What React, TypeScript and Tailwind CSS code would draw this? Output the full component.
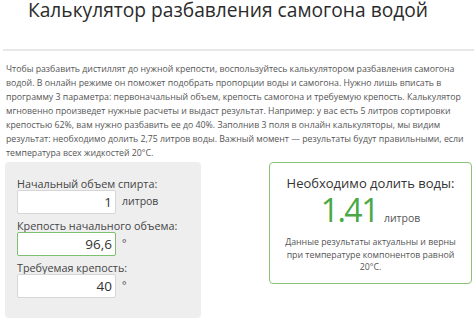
const lines = [
  'Чтобы разбавить дистиллят до нужной крепости, воспользуйтесь калькулятором разбавления самогона',
  'водой. В онлайн режиме он поможет подобрать пропорции воды и самогона. Нужно лишь вписать в',
  'программу 3 параметра: первоначальный объем, крепость самогона и требуемую крепость. Калькулятор',
  'мгновенно произведет нужные расчеты и выдаст результат. Например: у вас есть 5 литров сортировки',
  'крепостью 62%, вам нужно разбавить ее до 40%. Заполнив 3 поля в онлайн калькуляторы, мы видим',
  'результат: необходимо долить 2,75 литров воды. Важный момент — результаты будут правильными, если',
  'температура всех жидкостей 20°С.',
];

export default function App() {
  return (
    <div className="w-[474px] h-[324px] overflow-hidden bg-white font-['Open_Sans',sans-serif] text-[#333]">
      <h1 className="pl-[28px] text-[19.2px] leading-[20px] text-[#2b2b2b]">
        Калькулятор разбавления самогона водой
      </h1>

      <div className="mt-[29px] ml-[3px] h-[2px] bg-[#e8e8e8]" />

      <div className="mt-[11px] px-[6px] text-[8.75px] leading-[14px] text-[#555]">
        {lines.map(l => (
          <div key={l} className="whitespace-nowrap">{l}</div>
        ))}
      </div>

      <div className="mt-[2px] flex items-start">
        <div className="ml-[5px] w-[196px] h-[156px] rounded-[4px] bg-[#eeeeee] pl-[12px] pt-[15px]">
          <Field label="Начальный объем спирта:" value="1" unit="литров" />
          <Field label="Крепость начального объема:" value="96,6" unit="°" active />
          <Field label="Требуемая крепость:" value="40" unit="°" />
        </div>

        <div className="ml-[68px] w-[203px] h-[122px] rounded-[4px] border border-[#8cc378] flex flex-col items-center pt-[10px]">
          <div className="text-[13px] leading-[20px] text-[#333]">Необходимо долить воды:</div>
          <div className="flex items-baseline -mt-[1px]">
            <span className="text-[32px] leading-[36px] tracking-[-1.5px] text-[#4aa845]">1.41</span>
            <span className="ml-[6px] text-[10.5px] text-[#555]">литров</span>
          </div>
          <div className="mt-[8px] text-center text-[8.8px] leading-[12.5px] text-[#555]">
            Данные результаты актуальны и верны
            <br />
            при температуре компонентов равной
            <br />
            20°С.
          </div>
        </div>
      </div>
    </div>
  );
}

function Field({ label, value, unit, active }: { label: string; value: string; unit: string; active?: boolean }) {
  return (
    <div className="mb-[5px]">
      <div className="text-[10.8px] leading-[13px] text-[#444]">{label}</div>
      <div className="flex items-center">
        <div
          className={
            'w-[99px] h-[24px] bg-white rounded-[2px] border text-right pr-[3px] text-[13.5px] leading-[22px] text-[#333] ' +
            (active ? 'border-[#7cc070]' : 'border-[#d6d6d6]')
          }
        >
          {value}
        </div>
        <span className="ml-[6px] text-[10.5px] text-[#444]">{unit}</span>
      </div>
    </div>
  );
}
